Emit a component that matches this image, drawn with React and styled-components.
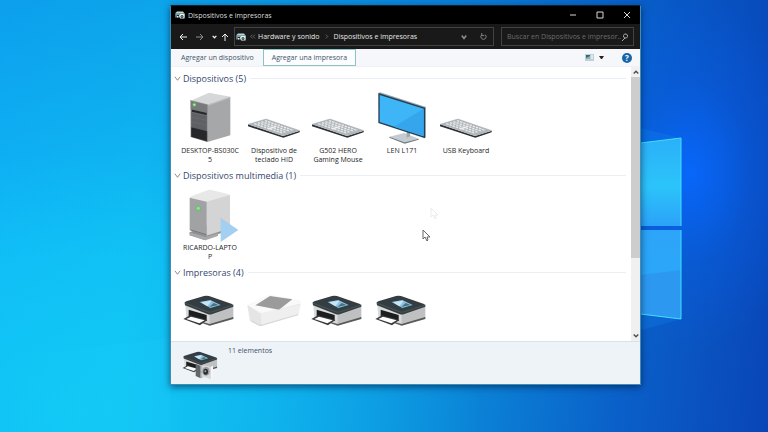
import React from "react";
import styled, { createGlobalStyle } from "styled-components";

const GlobalStyle = createGlobalStyle`
  * { box-sizing: border-box; }
  body { margin: 0; font-family: "Open Sans", "Noto Sans", sans-serif; font-size: 7px; }
  button, input { font: inherit; color: inherit; border: 0; padding: 0; margin: 0; background: none; }
  svg { display: block; flex: none; overflow: visible; }
  h1, h2, p, ul { margin: 0; padding: 0; font: inherit; }
`;

const Desktop = styled.main`
  position: relative;
  display: flex;
  min-height: 100vh;
  padding: 5px 127px 47px 170px;
  overflow: hidden;
  background:
    radial-gradient(ellipse 120px 180px at 90% 40%, rgba(8, 104, 255, 0.9), rgba(8, 96, 240, 0.35) 50%, rgba(8, 96, 240, 0) 100%),
    radial-gradient(ellipse 420px 260px at 8% 95%, rgba(18, 208, 244, 0.6), rgba(18, 200, 244, 0) 100%),
    linear-gradient(to bottom, rgba(0, 60, 190, 0.2), rgba(0, 90, 200, 0) 60%),
    linear-gradient(97deg, #0fb8f8 0%, #10bef5 20%, #0da3e8 42%, #0b86d8 62%, #0a5fc8 82%, #0945b6 100%);
`;

const Wallpaper = styled.svg`
  position: absolute;
  inset: 0;
  width: 100%;
  height: 100%;
`;

const Window = styled.section`
  position: relative;
  display: flex;
  flex: 1;
  flex-direction: column;
  min-width: 0;
  border: 1px solid #3f8fb4;
  border-top-color: #10202c;
  background: #fff;
  box-shadow: 0 2px 7px rgba(0, 20, 60, 0.6);
`;

const TitleBar = styled.header`
  display: flex;
  align-items: center;
  height: 18px;
  padding-left: 4px;
  background: #000;
  color: #dcdcdc;
`;

const Title = styled.h1`
  flex: 1;
  margin-left: 3px;
`;

const CaptionButton = styled.button`
  display: grid;
  place-items: center;
  width: 27px;
  height: 18px;
  color: #d8d8d8;
`;

const NavBar = styled.nav`
  display: flex;
  align-items: center;
  height: 25px;
  padding: 0 6px;
  background: #191919;
  color: #e8e8e8;
`;

const NavButton = styled.button`
  display: grid;
  place-items: center;
  width: ${(p) => p.$width || 14}px;
  height: 18px;
  color: ${(p) => (p.$dim ? "#8f8f8f" : "#f2f2f2")};
`;

const AddressBar = styled.div`
  display: flex;
  flex: 1;
  align-items: center;
  height: 19px;
  min-width: 0;
  margin-right: 7px;
  padding-left: 1px;
  border: 1px solid #424242;
  white-space: nowrap;
`;

const Crumb = styled.a`
  color: #e6e6e6;
  text-decoration: none;
`;

const Separator = styled.span`
  display: grid;
  place-items: center;
  width: ${(p) => p.$width}px;
  color: #8c8c8c;
`;

const Spacer = styled.div`
  flex: 1;
`;

const SearchBox = styled.label`
  display: flex;
  align-items: center;
  width: 133px;
  height: 19px;
  padding: 0 4px 0 5px;
  border: 1px solid #424242;
  color: #a8a8a8;
`;

const SearchInput = styled.input`
  flex: 1;
  min-width: 0;
  outline: 0;
  &::placeholder { color: #6c6c6c; opacity: 1; }
`;

const CommandBar = styled.div`
  display: flex;
  align-items: center;
  height: 18px;
  padding: 0 8px 0 1px;
  border-bottom: 1px solid #f0f1f4;
  background: #f6f7fa;
  color: #44546a;
`;

const Command = styled.button`
  height: 17px;
  padding: 0 8px;
  border: 1px solid ${(p) => (p.$active ? "#8cc4c6" : "transparent")};
  background: ${(p) => (p.$active ? "#fbfdfe" : "transparent")};
  white-space: nowrap;
`;

const ToolButton = styled.button`
  display: grid;
  place-items: center;
  width: ${(p) => p.$width}px;
  height: 16px;
`;

const HelpButton = styled.button`
  width: 10px;
  height: 10px;
  margin-left: 14px;
  border-radius: 50%;
  background: #1766ab;
  color: #fff;
  font-size: 8px;
  font-weight: 700;
  line-height: 10px;
`;

const Body = styled.div`
  display: flex;
  flex: 1 1 0;
  min-height: 0;
  overflow: hidden;
`;

const Groups = styled.div`
  flex: 1;
  min-width: 0;
  padding: 3px 5px 0 3px;
  overflow: hidden;
`;

const Group = styled.section`
  height: 97px;
`;

const GroupHeader = styled.h2`
  display: flex;
  align-items: center;
  gap: 2px;
  height: 17px;
  color: #34466e;
  font-size: 9px;
  white-space: nowrap;
  svg { color: #7c7c7c; }
  &::after {
    content: "";
    flex: 1;
    height: 1px;
    margin-left: 2px;
    background: #ebeef2;
  }
`;

const Items = styled.ul`
  display: flex;
  padding: 5px 0 0 4px;
  list-style: none;
`;

const Item = styled.li`
  display: flex;
  flex-direction: column;
  align-items: center;
  width: 64px;
  color: #1e1e1e;
  line-height: 9px;
  text-align: center;
  white-space: pre-line;
`;

const ItemLabel = styled.span`
  margin-top: 2px;
`;

const Scrollbar = styled.div`
  display: flex;
  flex-direction: column;
  width: 9px;
  background: #f0f0f0;
`;

const ScrollButton = styled.button`
  display: grid;
  place-items: center;
  height: 10px;
  color: #505050;
`;

const Thumb = styled.div`
  flex: 5;
  background: #cdcdcd;
`;

const Track = styled.div`
  flex: 2;
`;

const Details = styled.footer`
  display: flex;
  gap: 10px;
  height: 43px;
  padding: 3px 12px;
  border-top: 1px solid #d9e2e8;
  background: #eef3f8;
  color: #3e5068;
  line-height: 11px;
`;

const DetailsIcon = styled.div`
  padding-top: 6px;
`;

const Pointer = styled.svg`
  position: absolute;
  left: ${(p) => p.$left};
  top: ${(p) => p.$top};
  opacity: ${(p) => p.$opacity};
`;

const Stroke = ({ d, size = 8, width = 1, box = 8 }) => (
  <svg width={size} height={size} viewBox={`0 0 ${box} ${box}`} fill="none" stroke="currentColor" strokeWidth={width}>
    <path d={d} />
  </svg>
);

const DevicesGlyph = () => (
  <svg width="10" height="8" viewBox="0 0 20 16">
    <path d="M1 4 4 1h12l3 4v8H1Z" fill="#b9d8d4" />
    <path d="M1 5h18v2H1Z" fill="#3f6f6e" />
    <path d="M3 8h5v6H3Z" fill="#223" />
    <path d="M4 10h3v3H4Z" fill="#eee" />
    <rect x="10" y="6" width="9" height="9" fill="#e9eeee" />
    <circle cx="14" cy="11" r="3" fill="#294b54" />
    <circle cx="14" cy="11" r="1" fill="#bde" />
  </svg>
);

const Tower = () => (
  <svg width="52" height="52" viewBox="48 66 156 156">
    <path d="M68 92 123 68 187 80 118 104Z" fill="#d6d7d8" />
    <path d="M118 104 187 80V196L118 216Z" fill="#a5a7a9" />
    <path d="M118 104 187 80V84L118 108Z" fill="#bdbfc0" />
    <path d="M68 92 118 104V216L68 201Z" fill="#6b6c6e" />
    <path d="M68 92 118 104V128L68 117Z" fill="#77797a" />
    <path d="M72 119 116 129V135L72 125Z" fill="#242528" />
    <path d="M72 129 116 139V184L72 172Z" fill="#5f6064" />
    <path d="M72 141 116 151M72 155 116 166" stroke="#77787c" />
    <path d="M70 172 118 184V214L70 200Z" fill="#26272b" />
    <circle cx="79" cy="104" r="6" fill="#5fb865" />
    <circle cx="79" cy="104" r="3" fill="#b8f5b0" />
    <path d="M66 91 118 104V216" fill="none" stroke="#8d8f90" strokeWidth="2" />
  </svg>
);

const MediaTower = () => (
  <svg width="52" height="52" viewBox="48 72 156 156">
    <path d="M65 202 120 180 186 196 112 220V226L65 211Z" fill="#8f9091" />
    <path d="M65 202 112 216 150 204V213L112 226 65 211Z" fill="#a7a8a9" />
    <path d="M65 99Q64 96 70 94L118 76Q123 73 130 75L180 87Q187 89 185 94L116 111Z" fill="#e8e8e8" />
    <path d="M115 110 186 90V190L115 212Z" fill="#d4d4d5" />
    <path d="M65 98 116 110V211L65 196Z" fill="#a1a2a3" />
    <path d="M68 195 116 209" stroke="#777" strokeWidth="3" />
    <circle cx="91" cy="130" r="8" fill="#78b878" />
    <circle cx="91" cy="130" r="5" fill="#7cf07c" />
    <path d="M158 158V231L211 195Z" fill="#a3cff1" />
  </svg>
);

const Keyboard = () => (
  <svg width="52" height="52" viewBox="240 66 156 156">
    <path d="M240 163 345 198 395 182V187L346 203 240 169Z" fill="#2d2f32" />
    <path d="M240 163 294 147 396 182 345 198Z" fill="#b0b6b9" />
    <g stroke="#e8ebec" strokeWidth="4" strokeDasharray="7 3">
      <path d="M259 161 345 190M270 158 355 187M280 155 366 184M291 152 376 181" />
    </g>
    <path d="M300 177 325 169" stroke="#eef0f1" strokeWidth="4" />
    <path d="M240 163 294 147 396 182" fill="none" stroke="#8d9296" strokeWidth="1" />
  </svg>
);

const Monitor = () => (
  <svg width="52" height="52" viewBox="204 66 156 156">
    <path d="M244 200 289 189 332 206 290 217Z" fill="#c5ccd1" />
    <path d="M244 200 290 217 332 206V209L290 221 244 203Z" fill="#737c83" />
    <path d="M296 180 306 183V199L296 203Z" fill="#9ba6ad" />
    <path d="M212 69 216 67 354 111V202L350 204Z" fill="#92a3ad" />
    <path d="M211 69 351 113V205L211 159Z" fill="#253f51" />
    <path d="M215 75 347 116V199L215 156Z" fill="#3eb5f7" />
    <path d="M347 116V199L258 170Z" fill="#35a5ec" />
  </svg>
);

const PrinterShape = () => (
  <g>
    <path d="M52 122 127 150V184L55 160Z" fill="#dadada" />
    <path d="M125 150 196 127V163L125 184Z" fill="#bfc0c1" />
    <path d="M125 180 196 159V165L125 185 104 178V174Z" fill="#57595b" />
    <path d="M62 137 116 153V172L62 157Z" fill="#1b1d1f" />
    <path d="M46 165 66 154 118 168 96 184Z" fill="#3a3c3e" />
    <path d="M55 165 69 158 110 169 94 178Z" fill="#fff" />
    <path d="M50 116Q50 114 55 112L108 96Q116 94 123 96L192 120Q198 123 196 128L131 151Q125 153 118 150L51 124Z" fill="#343d41" />
    <path d="M50 117 121 144Q126 146 133 143L196 123" fill="none" stroke="#566064" strokeWidth="2" />
    <path d="M95 114 127 108 158 123 127 132Z" fill="#8fc0dc" />
    <path d="M99 115 127 110 130 112 118 127Z" fill="#c6e6f6" />
    <path d="M124 129 137 117 152 123Z" fill="#3c7689" />
  </g>
);

const Printer = () => (
  <svg width="52" height="52" viewBox="48 66 156 156">
    <PrinterShape />
  </svg>
);

const Scanner = () => (
  <svg width="52" height="52" viewBox="240 66 156 156">
    <path d="M238 124 278 140 395 119 391 153 282 186Q276 188 270 184L246 171Z" fill="#e5e5e5" />
    <path d="M279 145 399 118 391 153 280 186Z" fill="#efefef" />
    <path d="M237 122 299 94Q304 91 311 93L394 108Q401 111 397 119L288 149Q280 151 273 147Z" fill="#f9f9f9" />
    <path d="M262 124 306 96 373 106 333 137Z" fill="#9b9b9b" />
    <path d="M239 126 277 147Q282 150 289 147L396 120" fill="none" stroke="#d5d5d5" strokeWidth="1" />
    <path d="M250 171 272 183Q279 185 286 182L390 152" fill="none" stroke="#cacaca" strokeWidth="2" />
  </svg>
);

const DevicesIcon = () => (
  <svg width="35" height="30" viewBox="0 0 105 90">
    <g transform="translate(-33 -63) scale(0.69)">
      <PrinterShape />
    </g>
    <path d="M38 39 53 44V82L38 75Z" fill="#636669" />
    <path d="M53 44 59 42V80L53 82Z" fill="#b7babc" />
    <path d="M58 43 84 47V84L58 77Z" fill="#d8d9da" />
    <path d="M84 47 90 44V79L84 84Z" fill="#f6f6f6" />
    <ellipse cx="69" cy="61" rx="11" ry="13" fill="#999b9c" />
    <ellipse cx="68" cy="62" rx="7" ry="9" fill="#292c2f" />
    <circle cx="67" cy="61" r="3" fill="#9aa9b6" />
  </svg>
);

const groups = [
  {
    title: "Dispositivos (5)",
    items: [
      { icon: Tower, label: "DESKTOP-BS030C\n5" },
      { icon: Keyboard, label: "Dispositivo de\nteclado HID" },
      { icon: Keyboard, label: "G502 HERO\nGaming Mouse" },
      { icon: Monitor, label: "LEN L171" },
      { icon: Keyboard, label: "USB Keyboard" },
    ],
  },
  {
    title: "Dispositivos multimedia (1)",
    items: [{ icon: MediaTower, label: "RICARDO-LAPTO\nP" }],
  },
  {
    title: "Impresoras (4)",
    items: [{ icon: Printer }, { icon: Scanner }, { icon: Printer }, { icon: Printer }],
  },
];

const Cursor = (props) => (
  <Pointer width="9" height="13" viewBox="0 0 9 13" {...props}>
    <path d="M1 1V10L3 8 5 12 6 11 5 8H8Z" fill="#fff" stroke="#666" strokeWidth="1" />
  </Pointer>
);

const DesktopArt = () => (
  <Wallpaper viewBox="0 0 768 432" preserveAspectRatio="none" aria-hidden="true">
    <defs>
      <linearGradient id="upper" x1="0" y1="0" x2="0" y2="1">
        <stop offset="0" stopColor="#2bb0f8" />
        <stop offset="0.55" stopColor="#2bc4fa" />
        <stop offset="1" stopColor="#2ba2f8" />
      </linearGradient>
      <linearGradient id="lower" x1="0" y1="0" x2="0" y2="1">
        <stop offset="0" stopColor="#2da4f8" />
        <stop offset="1" stopColor="#28a9f8" />
      </linearGradient>
      <linearGradient id="beam" x1="0" y1="0" x2="1" y2="0">
        <stop offset="0" stopColor="#2bd0ff" stopOpacity="0" />
        <stop offset="1" stopColor="#2bd0ff" stopOpacity="0.12" />
      </linearGradient>
    </defs>
    <path d="M0 358 170 338V432H0Z" fill="url(#beam)" />
    <path d="M600 118 681 138 640 143H600ZM600 330 640 314 681 319 600 342Z" fill="#1595f5" opacity="0.2" />
    <path d="M600 148 681 138V226H600Z" fill="url(#upper)" />
    <path d="M600 230H681V319L600 309Z" fill="url(#lower)" />
    <path d="M600 280 681 270V319L600 309Z" fill="#2d98f0" />
    <path d="M600 148 681 138V226M600 309 681 319V230" fill="none" stroke="#3fe0fb" strokeWidth="1" />
  </Wallpaper>
);

export default function App() {
  return (
    <>
      <GlobalStyle />
      <Desktop>
        <DesktopArt />
        <Window>
          <TitleBar>
            <DevicesGlyph />
            <Title>Dispositivos e impresoras</Title>
            <CaptionButton aria-label="Minimizar"><Stroke d="M1 4H7" /></CaptionButton>
            <CaptionButton aria-label="Maximizar"><Stroke d="M1 1H7V7H1Z" /></CaptionButton>
            <CaptionButton aria-label="Cerrar"><Stroke d="M1 1 7 7M7 1 1 7" /></CaptionButton>
          </TitleBar>
          <NavBar>
            <NavButton $width={11} aria-label="Atrás"><Stroke d="M8 4H1M4 1 1 4 4 7" /></NavButton>
            <NavButton $width={24} $dim aria-label="Adelante"><Stroke d="M0 4H7M4 1 7 4 4 7" /></NavButton>
            <NavButton $width={4} aria-label="Ubicaciones recientes"><Stroke size={5} d="M1 3 4 6 7 3" width={2} /></NavButton>
            <NavButton $width={18} aria-label="Subir"><Stroke d="M4 8V1M1 4 4 1 7 4" /></NavButton>
            <AddressBar>
              <DevicesGlyph />
              <Separator $width={12}><Stroke size={5} d="M4 1 1 4 4 7M8 1 5 4 8 7" /></Separator>
              <Crumb href="#hardware">Hardware y sonido</Crumb>
              <Separator $width={14}><Stroke size={5} d="M3 1 6 4 3 7" /></Separator>
              <Crumb href="#dispositivos">Dispositivos e impresoras</Crumb>
              <Spacer />
              <NavButton $width={20} $dim aria-label="Historial"><Stroke size={6} d="M1 2 4 6 7 2" width={2} /></NavButton>
              <NavButton $width={19} $dim aria-label="Actualizar"><Stroke size={7} d="M6 2A3 3 0 1 1 2 2M2 0V3H5" /></NavButton>
            </AddressBar>
            <SearchBox>
              <SearchInput aria-label="Buscar" placeholder="Buscar en Dispositivos e impresor..." />
              <Stroke d="M5 1A2 2 0 1 1 4 5A2 2 0 0 1 5 1M4 5 1 8" />
            </SearchBox>
          </NavBar>
          <CommandBar>
            <Command>Agregar un dispositivo</Command>
            <Command $active>Agregar una impresora</Command>
            <Spacer />
            <ToolButton $width={12} aria-label="Vista">
              <svg width="9" height="7" viewBox="0 0 9 7">
                <path d="M0 0H9V7H0Z" fill="#bdd0db" />
                <path d="M1 1H5V5H1Z" fill="#3c6680" />
                <path d="M1 4 5 2V5H1Z" fill="#8fb6a2" />
                <path d="M6 2H8M6 4H8" stroke="#fff" />
              </svg>
            </ToolButton>
            <ToolButton $width={13} aria-label="Más opciones">
              <svg width="5" height="3" viewBox="0 0 5 3"><path d="M0 0H5L3 3H2Z" fill="#222" /></svg>
            </ToolButton>
            <HelpButton aria-label="Ayuda">?</HelpButton>
          </CommandBar>
          <Body>
            <Groups>
              {groups.map((group) => (
                <Group key={group.title}>
                  <GroupHeader>
                    <Stroke size={7} d="M1 2 4 6 7 2" />
                    {group.title}
                  </GroupHeader>
                  <Items>
                    {group.items.map(({ icon: Icon, label }, index) => (
                      <Item key={index}>
                        <Icon />
                        {label && <ItemLabel>{label}</ItemLabel>}
                      </Item>
                    ))}
                  </Items>
                </Group>
              ))}
            </Groups>
            <Scrollbar>
              <ScrollButton aria-label="Desplazar arriba"><Stroke size={6} d="M1 6 4 3 7 6" width={2} /></ScrollButton>
              <Thumb />
              <Track />
              <ScrollButton aria-label="Desplazar abajo"><Stroke size={6} d="M1 2 4 5 7 2" width={2} /></ScrollButton>
            </Scrollbar>
          </Body>
          <Details>
            <DetailsIcon><DevicesIcon /></DetailsIcon>
            <p>11 elementos</p>
          </Details>
        </Window>
        <Cursor $left="55%" $top="53%" $opacity={1} />
        <Cursor $left="56%" $top="48%" $opacity={0.12} />
      </Desktop>
    </>
  );
}
